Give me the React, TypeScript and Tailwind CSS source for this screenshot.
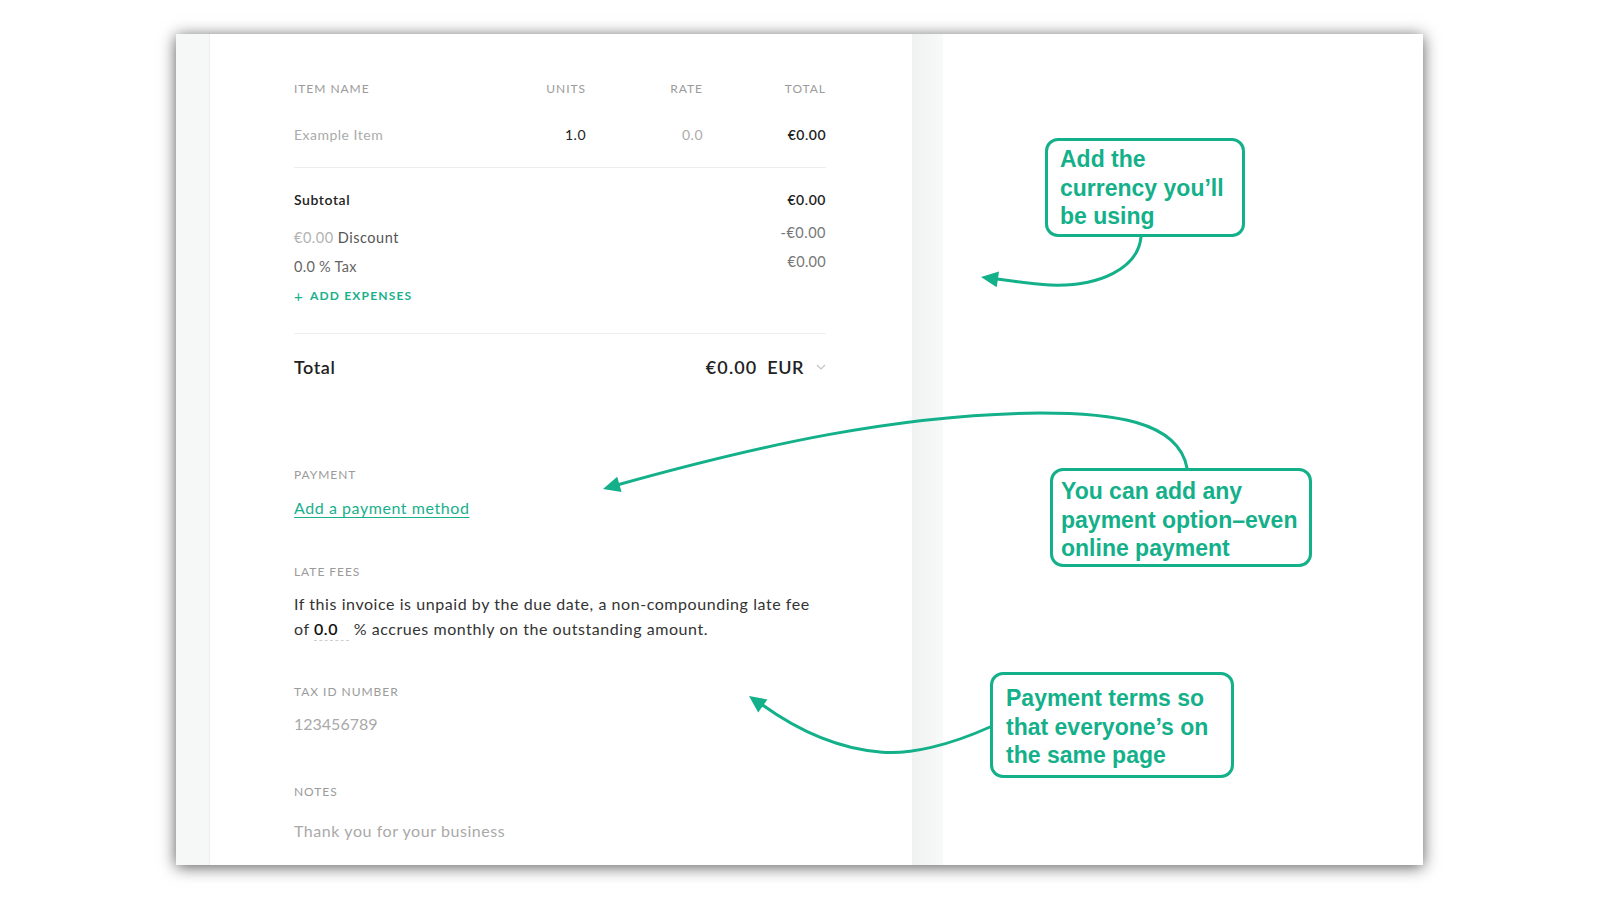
import React from "react";

const green = "#13b08a";

const Label = ({ children, className = "" }: { children: React.ReactNode; className?: string }) => (
  <div className={`text-[12px] leading-[16px] tracking-[0.08em] text-[#9b9b9b] ${className}`}>{children}</div>
);

const Callout = ({ lines, className }: { lines: string[]; className: string }) => (
  <div
    className={`absolute rounded-[13px] border-[3px] border-[#13b08a] bg-white text-[#13b08a] font-bold text-[23px] leading-[28.5px] ${className}`}
    style={{ fontFamily: '"Liberation Sans", Arial, sans-serif' }}
  >
    {lines.map((l) => (
      <div key={l} className="whitespace-nowrap">
        {l}
      </div>
    ))}
  </div>
);

const Arrows = () => (
  <svg className="absolute left-0 top-0 pointer-events-none" width="1600" height="900" viewBox="0 0 1600 900">
    <g fill="none" stroke={green} strokeWidth="3" strokeLinecap="round">
      <path d="M1141 237 C1138 268 1100 287 1050 285 C1030 284 1012 281 997 279" />
      <path d="M1187 468 C1178 420 1110 413 1040 413 C900 414 760 445 617 485" />
      <path d="M990 727 C950 745 910 755 880 752 C830 748 790 725 761 704" />
    </g>
    <g fill={green}>
      <polygon points="981,277 999,271.5 996.7,287.3" />
      <polygon points="603,489 621.6,492.1 617.2,476.7" />
      <polygon points="749,696 767.4,699.4 758.2,712.4" />
    </g>
  </svg>
);

export default function App() {
  return (
    <div className="relative w-[1600px] h-[900px] bg-white overflow-hidden" style={{ fontFamily: "Lato, 'Open Sans', sans-serif" }}>
      <div className="ml-[176px] mt-[34px] w-[1247px] h-[831px] flex bg-white shadow-[0_2px_15px_rgba(0,0,0,0.65)]">
        <div className="w-[34px] bg-[#f6f7f7] border-r border-[#eef0f0]" />
        <div className="w-[702px] pl-[84px] pr-[86px] pt-[47px]">
          {/* line items */}
          <div className="grid grid-cols-[192px_100px_117px_123px]">
            <Label>ITEM NAME</Label>
            <Label className="text-right">UNITS</Label>
            <Label className="text-right">RATE</Label>
            <Label className="text-right">TOTAL</Label>
          </div>
          <div className="grid grid-cols-[192px_100px_117px_123px] mt-[28px] text-[14px] leading-[20px] tracking-[0.035em]">
            <div className="text-[#ababab]">Example Item</div>
            <div className="text-right text-[#222]">1.0</div>
            <div className="text-right text-[#ababab]">0.0</div>
            <div className="text-right text-[#222] font-semibold">€0.00</div>
          </div>
          <div className="mt-[22px] h-px bg-[#eceeee]" />

          {/* summary */}
          <div className="mt-[22px] flex justify-between text-[14px] leading-[20px] tracking-[0.04em] text-[#222] font-semibold">
            <span>Subtotal</span>
            <span>€0.00</span>
          </div>
          <div className="mt-[13px] flex justify-between items-start text-[14.5px] leading-[20px] tracking-[0.035em]">
            <span className="mt-[5px]">
              <span className="text-[#b3b3b3]">€0.00</span> <span className="text-[#555]">Discount</span>
            </span>
            <span className="text-[#777]">-€0.00</span>
          </div>
          <div className="mt-[4px] flex justify-between items-start text-[14.5px] leading-[20px] tracking-[0.02em]">
            <span className="mt-[5px] text-[#666]">0.0 % Tax</span>
            <span className="text-[#777]">€0.00</span>
          </div>
          <div className="mt-[11px] flex items-center text-[12px] leading-[16px] font-bold tracking-[0.1em] text-[#19b08c]">
            <span className="font-normal text-[15px] mr-[6px]">+</span>
            <span>ADD EXPENSES</span>
          </div>
          <div className="mt-[29px] h-px bg-[#eceeee]" />

          <div className="mt-[21px] flex justify-between items-center text-[18px] leading-[24px] tracking-[0.03em] text-[#222] font-semibold">
            <span>Total</span>
            <span className="flex items-center">
              <span className="tracking-[0.06em]">€0.00</span>
              <span className="ml-[10px]">EUR</span>
              <svg className="ml-[12px]" width="10" height="6" viewBox="0 0 10 6" fill="none" stroke="#c4c4c4" strokeWidth="1.2">
                <path d="M1 1l4 4 4-4" />
              </svg>
            </span>
          </div>

          {/* payment */}
          <Label className="mt-[88px]">PAYMENT</Label>
          <div className="mt-[13px] text-[16px] leading-[24px] tracking-[0.035em]">
            <a className="text-[#19b08c] underline underline-offset-[3px]" href="#">
              Add a payment method
            </a>
          </div>

          <Label className="mt-[44px]">LATE FEES</Label>
          <p className="mt-[11px] text-[16px] leading-[25px] tracking-[0.035em] text-[#333]">
            If this invoice is unpaid by the due date, a non-compounding late fee
            <br />
            of{" "}
            <span className="inline-block w-[35px] border-b border-dashed border-[#cfcfcf] leading-[22px] text-[#111] font-semibold">0.0</span>{" "}
            % accrues monthly on the outstanding amount.
          </p>

          <Label className="mt-[43px]">TAX ID NUMBER</Label>
          <div className="mt-[12px] text-[16px] leading-[24px] text-[#a9a9a9]">123456789</div>

          <Label className="mt-[48px]">NOTES</Label>
          <div className="mt-[19px] text-[16px] leading-[24px] tracking-[0.035em] text-[#a9a9a9]">Thank you for your business</div>
        </div>
        <div className="w-[31px] bg-gradient-to-r from-[#f0f1f1] to-[#f8f9f9]" />
        <div className="flex-1" />
      </div>

      <Arrows />
      <Callout lines={["Add the", "currency you’ll", "be using"]} className="left-[1045px] top-[138px] w-[200px] h-[99px] pl-[12px] pt-[4px]" />
      <Callout lines={["You can add any", "payment option–even", "online payment"]} className="left-[1050px] top-[468px] w-[262px] h-[99px] pl-[8px] pt-[6px]" />
      <Callout lines={["Payment terms so", "that everyone’s on", "the same page"]} className="left-[990px] top-[672px] w-[244px] h-[106px] pl-[13px] pt-[9px]" />
    </div>
  );
}
